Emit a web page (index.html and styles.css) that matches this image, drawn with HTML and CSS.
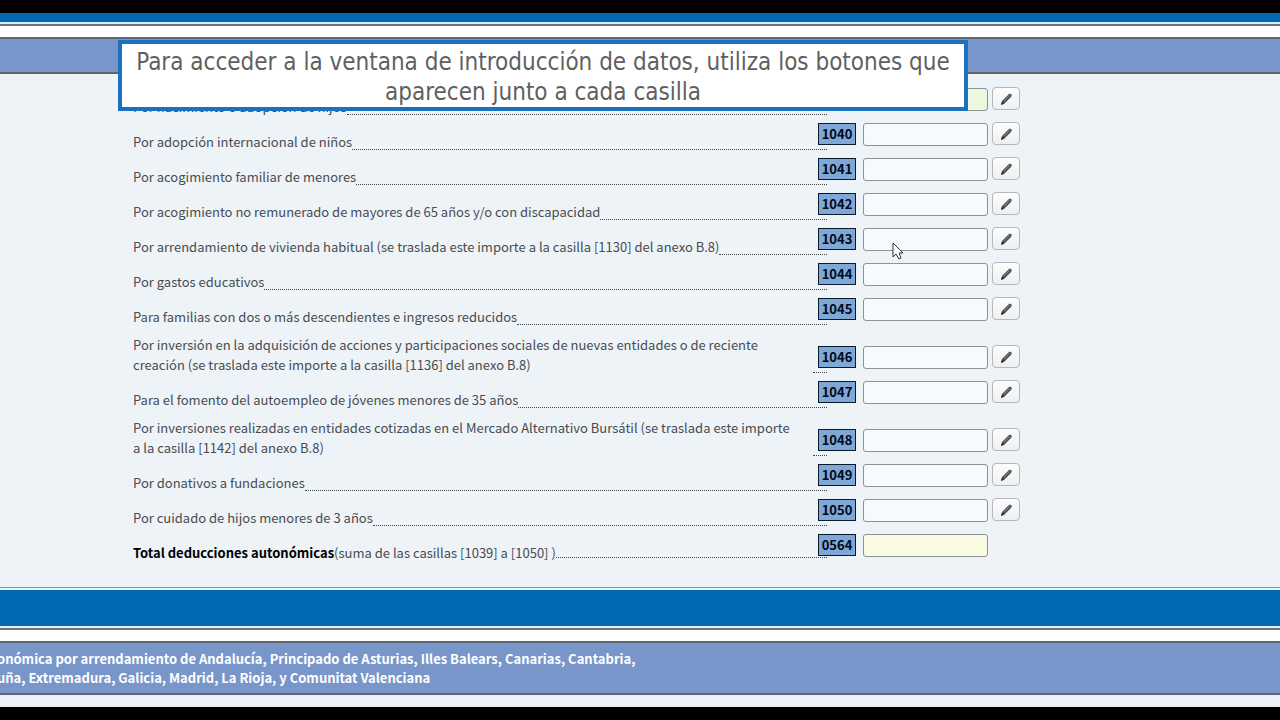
FILE: index.html
```html
<!DOCTYPE html>
<html lang="es">
<head>
    <meta charset="UTF-8">
    <meta name="viewport" content="width=device-width, initial-scale=1.0">
    <title>Deducciones autonómicas</title>
    <link rel="stylesheet" href="styles.css">
</head>
<body>
    <svg class="sprite" aria-hidden="true">
        <symbol id="pencil" viewBox="0 0 14 14">
            <path d="M2 13l1-4 7-7c1-1 4 0 2 3l-7 7z" fill="#505050"/>
            <path d="M5 9l6-6" stroke="#8a8a8a" stroke-width="1"/>
            <path d="M2 13l1-3 2 1z" fill="#222"/>
        </symbol>
    </svg>

    <div class="frame">
        <div class="blue-bar top-bar"></div>
        <div class="divider"></div>
        <div class="section-title empty-title"></div>

        <form class="deductions">
            <div class="row">
                <label for="c1039"><span>Por nacimiento o adopción de hijos</span><i class="leader"></i></label>
                <b class="code">1039</b>
                <input type="text" id="c1039" class="filled">
                <button type="button" aria-label="Editar 1039"><svg><use href="#pencil"/></svg></button>
            </div>
            <div class="row">
                <label for="c1040"><span>Por adopción internacional de niños</span><i class="leader"></i></label>
                <b class="code">1040</b>
                <input type="text" id="c1040">
                <button type="button" aria-label="Editar 1040"><svg><use href="#pencil"/></svg></button>
            </div>
            <div class="row">
                <label for="c1041"><span>Por acogimiento familiar de menores</span><i class="leader"></i></label>
                <b class="code">1041</b>
                <input type="text" id="c1041">
                <button type="button" aria-label="Editar 1041"><svg><use href="#pencil"/></svg></button>
            </div>
            <div class="row">
                <label for="c1042"><span>Por acogimiento no remunerado de mayores de 65 años y/o con discapacidad</span><i class="leader"></i></label>
                <b class="code">1042</b>
                <input type="text" id="c1042">
                <button type="button" aria-label="Editar 1042"><svg><use href="#pencil"/></svg></button>
            </div>
            <div class="row">
                <label for="c1043"><span>Por arrendamiento de vivienda habitual (se traslada este importe a la casilla [1130] del anexo B.8)</span><i class="leader"></i></label>
                <b class="code">1043</b>
                <input type="text" id="c1043">
                <button type="button" aria-label="Editar 1043"><svg><use href="#pencil"/></svg></button>
            </div>
            <div class="row">
                <label for="c1044"><span>Por gastos educativos</span><i class="leader"></i></label>
                <b class="code">1044</b>
                <input type="text" id="c1044">
                <button type="button" aria-label="Editar 1044"><svg><use href="#pencil"/></svg></button>
            </div>
            <div class="row">
                <label for="c1045"><span>Para familias con dos o más descendientes e ingresos reducidos</span><i class="leader"></i></label>
                <b class="code">1045</b>
                <input type="text" id="c1045">
                <button type="button" aria-label="Editar 1045"><svg><use href="#pencil"/></svg></button>
            </div>
            <div class="row">
                <label for="c1046"><span class="wide">Por inversión en la adquisición de acciones y participaciones sociales de nuevas entidades o de reciente<br>creación (se traslada este importe a la casilla [1136] del anexo B.8)</span><i class="leader"></i></label>
                <b class="code">1046</b>
                <input type="text" id="c1046">
                <button type="button" aria-label="Editar 1046"><svg><use href="#pencil"/></svg></button>
            </div>
            <div class="row">
                <label for="c1047"><span>Para el fomento del autoempleo de jóvenes menores de 35 años</span><i class="leader"></i></label>
                <b class="code">1047</b>
                <input type="text" id="c1047">
                <button type="button" aria-label="Editar 1047"><svg><use href="#pencil"/></svg></button>
            </div>
            <div class="row">
                <label for="c1048"><span class="wide">Por inversiones realizadas en entidades cotizadas en el Mercado Alternativo Bursátil (se traslada este importe<br>a la casilla [1142] del anexo B.8)</span><i class="leader"></i></label>
                <b class="code">1048</b>
                <input type="text" id="c1048">
                <button type="button" aria-label="Editar 1048"><svg><use href="#pencil"/></svg></button>
            </div>
            <div class="row">
                <label for="c1049"><span>Por donativos a fundaciones</span><i class="leader"></i></label>
                <b class="code">1049</b>
                <input type="text" id="c1049">
                <button type="button" aria-label="Editar 1049"><svg><use href="#pencil"/></svg></button>
            </div>
            <div class="row">
                <label for="c1050"><span>Por cuidado de hijos menores de 3 años</span><i class="leader"></i></label>
                <b class="code">1050</b>
                <input type="text" id="c1050">
                <button type="button" aria-label="Editar 1050"><svg><use href="#pencil"/></svg></button>
            </div>
            <div class="row total">
                <label for="c0564"><span><strong>Total deducciones autonómicas</strong>(suma de las casillas [1039] a [1050] )</span><i class="leader"></i></label>
                <b class="code">0564</b>
                <input type="text" id="c0564" readonly>
            </div>
        </form>

        <div class="blue-bar"></div>
        <div class="divider"></div>
        <h2 class="section-title">onómica por arrendamiento de Andalucía, Principado de Asturias, Illes Balears, Canarias, Cantabria,<br>uña, Extremadura, Galicia, Madrid, La Rioja, y Comunitat Valenciana</h2>
    </div>

    <p class="callout">Para acceder a la ventana de introducción de datos, utiliza los botones que aparecen junto a cada casilla</p>

    <svg class="cursor" viewBox="0 0 12 18" aria-hidden="true">
        <path d="M1 1v14l3-3 3 5 2-1-2-5h4z" fill="#fff" stroke="#333"/>
    </svg>
</body>
</html>
```
FILE: styles.css
```css
* {
    box-sizing: border-box;
}

body {
    margin: 0;
    min-height: 100vh;
    padding: 13px 0;
    display: flex;
    background-color: #000;
    color: #484c50;
    font-family: "Noto Sans CJK SC", "Open Sans", sans-serif;
    font-size: 13px;
    line-height: 20px;
    overflow: hidden;
}

.frame {
    flex: 1;
    background-color: #eef3f8;
}

.sprite {
    position: absolute;
    width: 0;
    height: 0;
}

.blue-bar {
    height: 40px;
    background-color: #0069b3;
    border-top: 2px solid #e2f8ff;
    border-bottom: 2px solid #d8efff;
}

.top-bar {
    height: 11px;
    border-top: none;
}

.divider {
    height: 13px;
    background-color: #fff;
    border-top: 2px solid #707378;
}

.section-title {
    margin: 0;
    padding: 6px 0;
    margin-left: -3px;
    background-color: #7896c9;
    border-top: 2px solid #5f6672;
    border-bottom: 2px solid #5f6672;
    color: #fff;
    font-size: 13px;
    font-weight: 700;
    line-height: 19px;
}

.empty-title {
    height: 37px;
}

.deductions {
    padding: 8px 24px 24px 133px;
    border-bottom: 1px solid #8b9299;
}

.row {
    display: flex;
    align-items: flex-end;
    min-height: 35px;
}

.row label {
    display: flex;
    align-items: flex-end;
    width: 694px;
    padding-top: 8px;
}

.row .wide {
    width: 680px;
}

.row strong {
    color: #000;
    font-weight: 700;
}

.leader {
    flex: 1;
    min-width: 14px;
    margin-bottom: 2px;
    border-bottom: 1px dotted #444;
}

.total .leader {
    margin-bottom: 5px;
}

.code {
    width: 38px;
    height: 22px;
    margin: 0 7px 7px -9px;
    background-color: #7fa8d6;
    border: 1px solid #0b1a2b;
    color: #000818;
    font-weight: 700;
    line-height: 20px;
    text-align: center;
}

.row input {
    width: 125px;
    height: 23px;
    margin: 0 4px 6px 0;
    background-color: #f6fafc;
    border: 1px solid #8c9298;
    border-radius: 3px;
}

.row input.filled {
    background-color: #e9f8df;
}

.total input {
    background-color: #fafbe3;
}

.row button {
    display: flex;
    align-items: center;
    justify-content: center;
    width: 28px;
    height: 23px;
    margin: 0 0 7px;
    padding: 0;
    background: linear-gradient(#fdfdfd, #eeeff1);
    border: 1px solid #b4b7bb;
    border-radius: 4px;
    cursor: pointer;
}

.row button svg {
    width: 14px;
    height: 14px;
}

.callout {
    position: absolute;
    top: 40px;
    left: 118px;
    width: 850px;
    margin: 0;
    padding: 3px 12px 0;
    background-color: #fff;
    border: 4px solid #1c70c0;
    color: #606060;
    font-family: "DejaVu Sans Condensed", "DejaVu Sans", sans-serif;
    font-size: 24px;
    line-height: 30px;
    text-align: center;
}

.cursor {
    position: absolute;
    top: 242px;
    left: 892px;
    width: 12px;
    height: 18px;
}
```
